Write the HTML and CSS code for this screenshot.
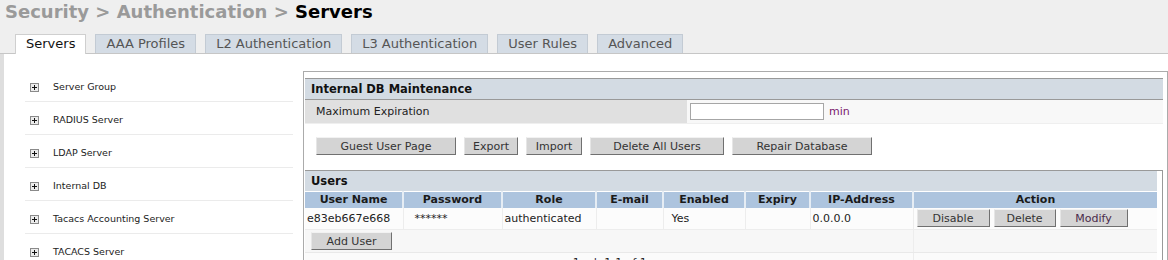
FILE: index.html
```html
<!DOCTYPE html>
<html lang="en">
<head>
  <meta charset="UTF-8" />
  <title>Security - Authentication - Servers</title>
  <link rel="stylesheet" href="styles.css">
</head>
<body>
  <div class="top">
    <h1 class="crumb"><span class="crumb-path">Security &gt; Authentication &gt; </span>Servers</h1>
    <ul class="tabs">
      <li class="tab active">Servers</li>
      <li class="tab">AAA Profiles</li>
      <li class="tab">L2 Authentication</li>
      <li class="tab">L3 Authentication</li>
      <li class="tab">User Rules</li>
      <li class="tab">Advanced</li>
    </ul>
  </div>

  <div class="main">
    <nav class="side">
      <div class="side-item"><svg class="plus" width="9" height="9" viewBox="0 0 9 9"><rect x="0.5" y="0.5" width="8" height="8" fill="#ececec" stroke="#8a8a8a"/><rect x="2" y="4" width="5" height="1" fill="#111"/><rect x="4" y="2" width="1" height="5" fill="#111"/></svg>Server Group</div>
      <div class="side-item"><svg class="plus" width="9" height="9" viewBox="0 0 9 9"><rect x="0.5" y="0.5" width="8" height="8" fill="#ececec" stroke="#8a8a8a"/><rect x="2" y="4" width="5" height="1" fill="#111"/><rect x="4" y="2" width="1" height="5" fill="#111"/></svg>RADIUS Server</div>
      <div class="side-item"><svg class="plus" width="9" height="9" viewBox="0 0 9 9"><rect x="0.5" y="0.5" width="8" height="8" fill="#ececec" stroke="#8a8a8a"/><rect x="2" y="4" width="5" height="1" fill="#111"/><rect x="4" y="2" width="1" height="5" fill="#111"/></svg>LDAP Server</div>
      <div class="side-item"><svg class="plus" width="9" height="9" viewBox="0 0 9 9"><rect x="0.5" y="0.5" width="8" height="8" fill="#ececec" stroke="#8a8a8a"/><rect x="2" y="4" width="5" height="1" fill="#111"/><rect x="4" y="2" width="1" height="5" fill="#111"/></svg>Internal DB</div>
      <div class="side-item"><svg class="plus" width="9" height="9" viewBox="0 0 9 9"><rect x="0.5" y="0.5" width="8" height="8" fill="#ececec" stroke="#8a8a8a"/><rect x="2" y="4" width="5" height="1" fill="#111"/><rect x="4" y="2" width="1" height="5" fill="#111"/></svg>Tacacs Accounting Server</div>
      <div class="side-item"><svg class="plus" width="9" height="9" viewBox="0 0 9 9"><rect x="0.5" y="0.5" width="8" height="8" fill="#ececec" stroke="#8a8a8a"/><rect x="2" y="4" width="5" height="1" fill="#111"/><rect x="4" y="2" width="1" height="5" fill="#111"/></svg>TACACS Server</div>
    </nav>

    <section class="panel">
      <div class="box-head">Internal DB Maintenance</div>
      <div class="field-row">
        <div class="field-label">Maximum Expiration</div>
        <div class="field-value"><input type="text" class="text-input" /><span class="unit">min</span></div>
      </div>
      <div class="btn-row">
        <button class="btn w-guest">Guest User Page</button>
        <button class="btn w-export">Export</button>
        <button class="btn w-import">Import</button>
        <button class="btn w-delall">Delete All Users</button>
        <button class="btn w-repair">Repair Database</button>
      </div>

      <div class="users">
        <div class="box-head users-head">Users</div>
        <table class="user-table">
          <colgroup>
            <col class="c-name"><col class="c-pass"><col class="c-role"><col class="c-mail">
            <col class="c-enabled"><col class="c-expiry"><col class="c-ip"><col class="c-action">
          </colgroup>
          <thead>
            <tr>
              <th>User Name</th>
              <th>Password</th>
              <th>Role</th>
              <th>E-mail</th>
              <th>Enabled</th>
              <th>Expiry</th>
              <th>IP-Address</th>
              <th>Action</th>
            </tr>
          </thead>
          <tbody>
            <tr class="data-row">
              <td>e83eb667e668</td>
              <td class="pass">******</td>
              <td>authenticated</td>
              <td></td>
              <td class="enabled">Yes</td>
              <td></td>
              <td>0.0.0.0</td>
              <td class="actions">
                <button class="btn w-disable">Disable</button>
                <button class="btn w-delete">Delete</button>
                <button class="btn w-modify modify">Modify</button>
              </td>
            </tr>
            <tr class="add-row">
              <td colspan="7"><button class="btn w-add">Add User</button></td>
              <td></td>
            </tr>
            <tr class="pager-row">
              <td colspan="7" class="pager">1 &nbsp;&nbsp; | &nbsp;1-1 of 1</td>
              <td></td>
            </tr>
          </tbody>
        </table>
      </div>
    </section>
  </div>
</body>
</html>
```

FILE: styles.css
```css
* {
  box-sizing: border-box;
}

body {
  margin: 0;
  background: #efefef;
  color: #222;
  font-family: "DejaVu Sans", Verdana, sans-serif;
  font-size: 11px;
  overflow: hidden;
}

.top {
  background: #efefef;
}

.crumb {
  margin: 0;
  padding: 1px 5px 0;
  font-size: 18px;
  line-height: 22px;
  font-weight: bold;
  color: #000;
}

.crumb-path {
  color: #9a9a9a;
}

.tabs {
  display: flex;
  align-items: flex-end;
  gap: 9px;
  list-style: none;
  margin: 11px 0 0;
  padding: 0 0 0 15px;
  border-bottom: 1px solid #c6c6c6;
}

.tab {
  padding: 0 10px;
  font-size: 13px;
  line-height: 18px;
  color: #555;
  background: #d4dce5;
  border: 1px solid #c3cbd4;
  border-bottom: 0;
}

.tab.active {
  background: #fff;
  color: #111;
  border-color: #cfcfcf;
  padding-bottom: 1px;
  margin-bottom: -1px;
}

.main {
  display: flex;
  align-items: flex-start;
  background: #fff;
  border-left: 4px solid #dedede;
  min-height: 300px;
}

/* left tree */
.side {
  width: 299px;
  flex-shrink: 0;
  padding: 15px 10px 0 21px;
}

.side-item {
  display: flex;
  align-items: center;
  height: 33px;
  padding: 12px 0 8px;
  border-bottom: 1px solid #ebebeb;
  font-size: 9.5px;
  line-height: 12px;
  color: #222;
}

.plus {
  display: block;
  margin: 0 14px 0 5px;
  flex-shrink: 0;
}

/* right panel */
.panel {
  flex: 1;
  margin-top: 17px;
  padding: 6px 4px 0 1px;
  border-top: 1px solid #ababab;
  border-left: 1px solid #ababab;
  border-right: 1px solid #ababab;
}

.box-head {
  height: 22px;
  padding-left: 6px;
  background: #d3dbe3;
  border-top: 1px solid #999;
  border-bottom: 1px solid #999;
  font-size: 11.5px;
  font-weight: bold;
  line-height: 20px;
  color: #111;
}

.field-row {
  display: flex;
  height: 24px;
  border-bottom: 1px solid #efefef;
}

.field-label {
  width: 382px;
  padding-left: 11px;
  background: #e0e0e0;
  line-height: 23px;
}

.field-value {
  flex: 1;
  display: flex;
  align-items: center;
  padding-left: 3px;
  background: #f8f8f8;
}

.text-input {
  width: 134px;
  height: 17px;
  margin: 0;
  border: 1px solid #a6a6a6;
  background: #fff;
}

.unit {
  margin-left: 5px;
  color: #7a1a6e;
}

.btn-row {
  display: flex;
  gap: 8px;
  margin-top: 13px;
  padding-left: 11px;
}

.btn {
  height: 18px;
  padding: 0;
  background: #d4d4d4;
  border: 1px solid;
  border-color: #f2f2f2 #707070 #707070 #e6e6e6;
  font-family: "DejaVu Sans", Verdana, sans-serif;
  font-size: 11px;
  line-height: 15px;
  color: #333;
}

.w-guest { width: 140px; }
.w-export { width: 54px; }
.w-import { width: 56px; }
.w-delall { width: 134px; }
.w-repair { width: 140px; }
.w-disable { width: 73px; }
.w-delete { width: 62px; }
.w-modify { width: 68px; }
.w-add { width: 81px; }

.modify {
  color: #4a2a4a;
}

/* users */
.users {
  margin-top: 15px;
  padding-right: 5px;
  border-top: 1px solid #999;
  border-right: 1px solid #999;
}

.users-head {
  height: 20px;
  border: 0;
  line-height: 20px;
}

.user-table {
  width: 100%;
  table-layout: fixed;
  border-collapse: collapse;
}

.c-name { width: 98px; }
.c-pass { width: 99px; }
.c-role { width: 94px; }
.c-mail { width: 67px; }
.c-enabled { width: 82px; }
.c-expiry { width: 65px; }
.c-ip { width: 103px; }
.c-action { width: 244px; }

.user-table th {
  height: 16px;
  padding: 0;
  background: #adc4de;
  border-top: 1px solid #fff;
  border-left: 2px solid #e6edf4;
  font-size: 11px;
  font-weight: bold;
  line-height: 15px;
  color: #1a1a1a;
  text-align: center;
}

.user-table th:first-child {
  border-left: 0;
}

.user-table td {
  padding: 0 0 0 2px;
  text-align: left;
  white-space: nowrap;
}

.data-row td {
  height: 22px;
  background: #fcfcfc;
  border-left: 1px solid #ededed;
  border-bottom: 1px solid #ededed;
}

.data-row td:first-child {
  border-left: 0;
}

.data-row .pass {
  padding-left: 11px;
  vertical-align: top;
  padding-top: 4px;
}

.data-row .enabled {
  padding-left: 8px;
}

.actions {
  font-size: 0;
}

.actions .btn {
  margin-right: 4px;
}

.actions .btn:first-child {
  margin-left: 1px;
}

.add-row td {
  height: 23px;
  padding-left: 6px;
  background: #f7f7f7;
  border-bottom: 1px solid #e9e9e9;
}

.add-row td + td {
  border-left: 1px solid #ededed;
}

.pager-row td {
  height: 24px;
  padding-top: 3px;
  vertical-align: top;
  background: #fbfbfb;
  line-height: 14px;
}

.pager-row .pager {
  text-align: center;
}

.pager-row td + td {
  border-left: 1px solid #ededed;
}
```
